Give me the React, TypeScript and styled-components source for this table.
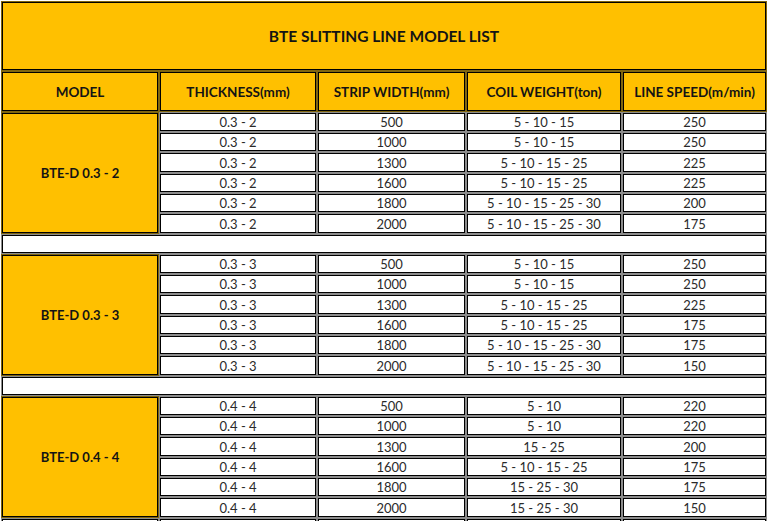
import React from "react";
import styled, { createGlobalStyle } from "styled-components";

const Global = createGlobalStyle`
  html, body { margin: 0; padding: 0; background: #ffffff; }
  body { font-family: Lato, "Open Sans", Arial, sans-serif; color: #1a1a1a; overflow: hidden; }
`;

const GOLD = "#FFC000";

const Table = styled.table`
  border-collapse: separate;
  border-spacing: 2px;
  table-layout: fixed;
  width: 768px;
  margin-top: 0;
  background: #ffffff;
`;

const Cell = styled.td<{ $gold?: boolean; $h?: number }>`
  box-sizing: border-box;
  border: 1px solid #000;
  box-shadow: 0 0 0 1px ${(p) => (p.$gold ? "#806610" : "#8c8c8c")};
  background: ${(p) => (p.$gold ? GOLD : "#ffffff")};
  height: ${(p) => p.$h ?? 18}px;
  padding: 0;
  text-align: center;
  vertical-align: middle;
  font-size: 13px;
  line-height: 14px;
  color: #2a2a2a;
`;

const TitleCell = styled(Cell)`
  font-size: 15.5px;
  font-weight: 700;
  color: #141414;
`;

const HeadCell = styled(Cell)`
  font-size: 13.5px;
  font-weight: 700;
  color: #141414;
`;

const ModelCell = styled(Cell)`
  font-weight: 700;
  color: #141414;
`;

type Group = {
  model: string;
  thick: string;
  rows: [string, string, string][];
};

const groups: Group[] = [
  {
    model: "BTE-D 0.3 - 2",
    thick: "0.3 - 2",
    rows: [
      ["500", "5 - 10 - 15", "250"],
      ["1000", "5 - 10 - 15", "250"],
      ["1300", "5 - 10 - 15 - 25", "225"],
      ["1600", "5 - 10 - 15 - 25", "225"],
      ["1800", "5 - 10 - 15 - 25 - 30", "200"],
      ["2000", "5 - 10 - 15 - 25 - 30", "175"],
    ],
  },
  {
    model: "BTE-D 0.3 - 3",
    thick: "0.3 - 3",
    rows: [
      ["500", "5 - 10 - 15", "250"],
      ["1000", "5 - 10 - 15", "250"],
      ["1300", "5 - 10 - 15 - 25", "225"],
      ["1600", "5 - 10 - 15 - 25", "175"],
      ["1800", "5 - 10 - 15 - 25 - 30", "175"],
      ["2000", "5 - 10 - 15 - 25 - 30", "150"],
    ],
  },
  {
    model: "BTE-D 0.4 - 4",
    thick: "0.4 - 4",
    rows: [
      ["500", "5 - 10", "220"],
      ["1000", "5 - 10", "220"],
      ["1300", "15 - 25", "200"],
      ["1600", "5 - 10 - 15 - 25", "175"],
      ["1800", "15 - 25 - 30", "175"],
      ["2000", "15 - 25 - 30", "150"],
    ],
  },
];

const rowHeights = [18, 18, 19, 18, 18, 19];
const widths = [156, 156, 147, 154, 143];
const headers = ["MODEL", "THICKNESS(mm)", "STRIP WIDTH(mm)", "COIL WEIGHT(ton)", "LINE SPEED(m/min)"];

export default function App() {
  return (
    <>
      <Global />
      <Table>
        <colgroup>
          {widths.map((w, i) => (
            <col key={i} style={{ width: w }} />
          ))}
        </colgroup>
        <tbody>
          <tr>
            <TitleCell $gold $h={68} colSpan={5}>
              BTE SLITTING LINE MODEL LIST
            </TitleCell>
          </tr>
          <tr>
            {headers.map((h) => (
              <HeadCell key={h} $gold $h={39}>
                {h}
              </HeadCell>
            ))}
          </tr>
          {groups.map((g, gi) => (
            <React.Fragment key={g.model}>
              {g.rows.map((r, ri) => (
                <tr key={ri}>
                  {ri === 0 && (
                    <ModelCell $gold $h={18} rowSpan={6}>
                      {g.model}
                    </ModelCell>
                  )}
                  <Cell $h={rowHeights[ri]}>{g.thick}</Cell>
                  <Cell $h={rowHeights[ri]}>{r[0]}</Cell>
                  <Cell $h={rowHeights[ri]}>{r[1]}</Cell>
                  <Cell $h={rowHeights[ri]}>{r[2]}</Cell>
                </tr>
              ))}
              {gi < groups.length - 1 && (
                <tr>
                  <Cell colSpan={5} />
                </tr>
              )}
            </React.Fragment>
          ))}
          <tr>
            <Cell />
            <Cell />
            <Cell />
            <Cell />
            <Cell />
          </tr>
        </tbody>
      </Table>
    </>
  );
}
